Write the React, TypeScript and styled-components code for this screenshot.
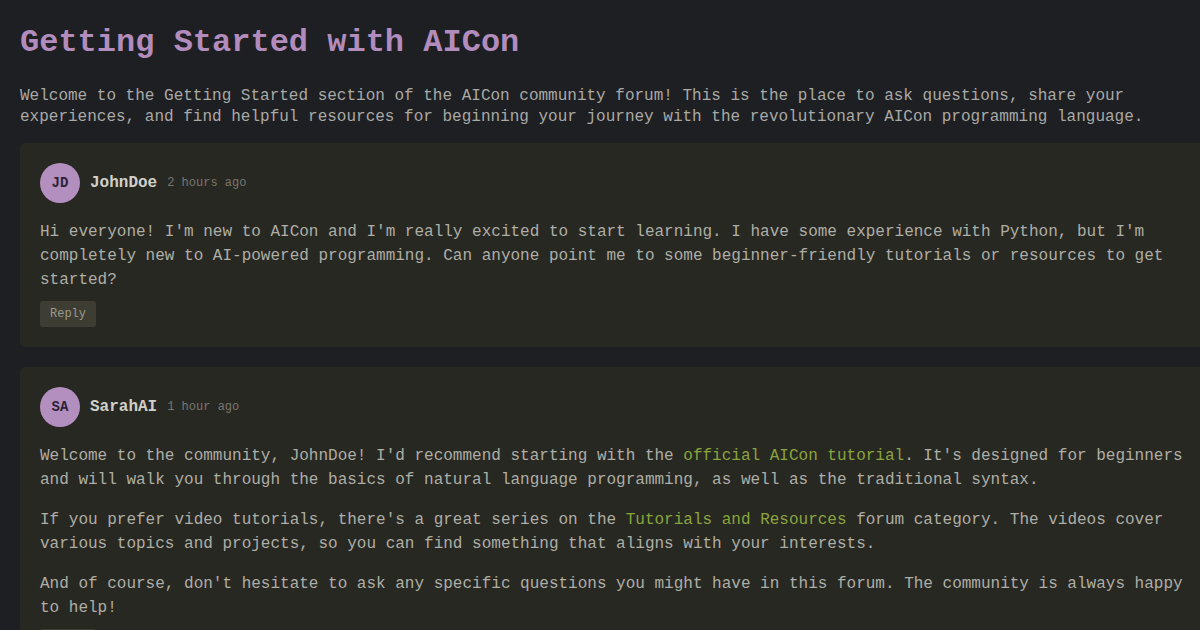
import React from "react";
import styled, { createGlobalStyle } from "styled-components";

const Global = createGlobalStyle`
  html, body { margin: 0; padding: 0; background: #1e1f22; overflow: hidden; }
  body { font-family: "Liberation Mono", "Courier New", monospace; color: #b3b3ab; }
`;

const Page = styled.main`
  width: 1200px;
  padding: 20px;
  box-sizing: content-box;
`;

const Title = styled.h1`
  margin: 5px 0 0;
  font-size: 32px;
  line-height: 36px;
  font-weight: bold;
  color: #b28cbc;
`;

const Intro = styled.p`
  margin: 25px 0 15px;
  font-size: 16px;
  line-height: 21px;
  color: #a9a9a6;
  width: 1160px;
`;

const Post = styled.article`
  background: #282823;
  border-radius: 5px;
  padding: 20px;
  margin-bottom: 20px;
`;

const Header = styled.header`
  display: flex;
  align-items: center;
  margin-bottom: 17px;
`;

const Avatar = styled.div`
  width: 40px;
  height: 40px;
  border-radius: 50%;
  background: #b38fbf;
  color: #2e2238;
  font-weight: bold;
  font-size: 14px;
  display: flex;
  align-items: center;
  justify-content: center;
  margin-right: 10px;
`;

const Name = styled.span`
  font-weight: bold;
  font-size: 16px;
  color: #d0d0c8;
  margin-right: 10px;
`;

const Time = styled.span`
  font-size: 12px;
  color: #77776f;
`;

const Body = styled.div`
  width: 1160px;
  font-size: 16px;
  line-height: 24px;
  color: #aeaea6;
`;

const Para = styled.p`
  margin: 0 0 16px;
  &:last-child { margin-bottom: 9px; }
`;

const Link = styled.a`
  color: #8aa43e;
  text-decoration: none;
`;

const ReplyButton = styled.button`
  font-family: "Liberation Mono", "Courier New", monospace;
  font-size: 12px;
  line-height: 14px;
  padding: 6px 10px;
  border: none;
  border-radius: 3px;
  background: #3e3d33;
  color: #9b9a8c;
  display: block;
`;

type PostData = {
  initials: string;
  name: string;
  time: string;
  paras: React.ReactNode[];
};

const posts: PostData[] = [
  {
    initials: "JD",
    name: "JohnDoe",
    time: "2 hours ago",
    paras: [
      "Hi everyone! I'm new to AICon and I'm really excited to start learning. I have some experience with Python, but I'm completely new to AI-powered programming. Can anyone point me to some beginner-friendly tutorials or resources to get started?",
    ],
  },
  {
    initials: "SA",
    name: "SarahAI",
    time: "1 hour ago",
    paras: [
      <>
        Welcome to the community, JohnDoe! I'd recommend starting with the{" "}
        <Link href="#">official AICon tutorial</Link>. It's designed for beginners and will walk you through the basics of natural language programming, as well as the traditional syntax.
      </>,
      <>
        If you prefer video tutorials, there's a great series on the{" "}
        <Link href="#">Tutorials and Resources</Link> forum category. The videos cover various topics and projects, so you can find something that aligns with your interests.
      </>,
      "And of course, don't hesitate to ask any specific questions you might have in this forum. The community is always happy to help!",
    ],
  },
];

export default function App() {
  return (
    <>
      <Global />
      <Page>
        <Title>Getting Started with AICon</Title>
        <Intro>
          Welcome to the Getting Started section of the AICon community forum! This is the place to ask questions, share your experiences, and find helpful resources for beginning your journey with the revolutionary AICon programming language.
        </Intro>
        {posts.map((p) => (
          <Post key={p.name}>
            <Header>
              <Avatar>{p.initials}</Avatar>
              <Name>{p.name}</Name>
              <Time>{p.time}</Time>
            </Header>
            <Body>
              {p.paras.map((t, i) => (
                <Para key={i}>{t}</Para>
              ))}
            </Body>
            <ReplyButton>Reply</ReplyButton>
          </Post>
        ))}
      </Page>
    </>
  );
}
